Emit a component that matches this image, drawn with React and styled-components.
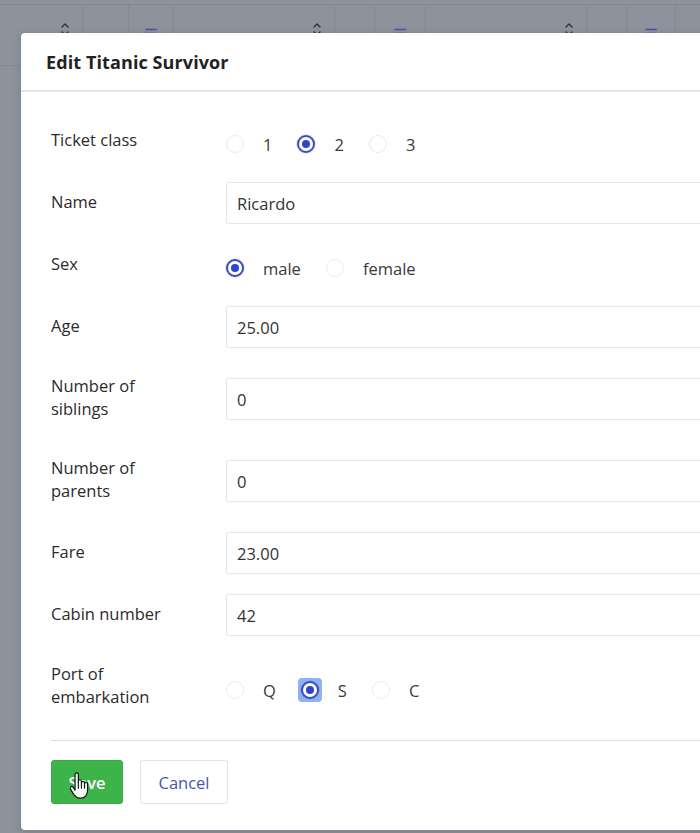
import React from "react";
import styled, { createGlobalStyle } from "styled-components";

const Global = createGlobalStyle`
  html, body { margin: 0; padding: 0; height: 100%; overflow: hidden; }
  body { font-family: "Open Sans", "Noto Sans", sans-serif; background: #8e929d; }
  #root { height: 100%; }
`;

const Page = styled.div`
  position: relative;
  width: 700px;
  height: 833px;
  overflow: hidden;
  background: #8e929d;
`;

const BgRow = styled.div`
  display: flex;
  margin-top: 4px;
  height: 60px;
  border-top: 1px solid #858893;
  border-bottom: 1px solid #858893;
`;

const BgCell = styled.div`
  flex: 0 0 ${(p) => p.$w}px;
  box-sizing: border-box;
  border-right: 1px solid #868994;
  display: flex;
  justify-content: ${(p) => (p.$kind === "sort" ? "flex-end" : "center")};
  padding-right: ${(p) => (p.$kind === "sort" ? "12px" : "0")};
  padding-top: 15px;
  font-family: "DejaVu Sans", sans-serif;
`;

const SortIcon = styled.svg`
  width: 10px;
  height: 18px;
`;

const EqIcon = styled.div`
  font-size: 18px;
  line-height: 18px;
  color: #4a519e;
  padding-top: 2px;
`;

const Modal = styled.div`
  position: absolute;
  left: 21px;
  top: 33px;
  width: 760px;
  background: #fff;
  border-radius: 4px;
  box-shadow: 0 2px 10px rgba(0, 0, 0, 0.15);
`;

const Header = styled.div`
  height: 59px;
  display: flex;
  align-items: center;
  padding-left: 25px;
  padding-top: 1px;
  box-sizing: border-box;
  border-bottom: 2px solid #e4e5e7;
`;

const Title = styled.h2`
  margin: 0;
  font-size: 18px;
  font-weight: 700;
  color: #222;
  letter-spacing: 0.1px;
`;

const Body = styled.div`
  padding: 28px 30px 26px 30px;
`;

const Form = styled.div`
  display: grid;
  grid-template-columns: 175px 1fr;
  row-gap: 20px;
  align-items: center;
`;

const Label = styled.div`
  font-size: 16.5px;
  font-weight: 500;
  line-height: 23px;
  color: #2b2b2b;
  padding: 6px 0 10px;
  width: 110px;
`;

const Input = styled.div`
  height: 42px;
  box-sizing: border-box;
  border: 1px solid #e6e7e9;
  border-radius: 2px;
  display: flex;
  align-items: center;
  padding-left: 10px;
  font-size: 16.5px;
  color: #333;
`;

const RadioGroup = styled.div`
  display: flex;
  align-items: center;
  min-height: 42px;
  box-sizing: border-box;
  padding-top: 6px;
`;

const RadioItem = styled.label`
  display: flex;
  align-items: center;
  gap: 19px;
  margin-right: 25px;
  font-size: 16.5px;
  color: #3a3a3a;
`;

const Focus = styled.span`
  display: inline-flex;
  margin: -3px;
  padding: 3px;
  border-radius: 4px;
  background: ${(p) => (p.$on ? "#8fb3f2" : "transparent")};
`;

const Circle = styled.span`
  width: 18px;
  height: 18px;
  box-sizing: border-box;
  border-radius: 50%;
  background: #fff;
  border: ${(p) => (p.$checked ? "2px solid #3b4cc2" : "1px solid #ececee")};
  display: flex;
  align-items: center;
  justify-content: center;
  box-shadow: ${(p) => (p.$checked ? "0 0 0 1px rgba(59,76,194,0.15)" : "none")};
  &::after {
    content: "";
    display: ${(p) => (p.$checked ? "block" : "none")};
    width: 8px;
    height: 8px;
    border-radius: 50%;
    background: #2d44d2;
  }
`;

const Divider = styled.div`
  margin-top: 22px;
  border-top: 1px solid #dcdde0;
`;

const Buttons = styled.div`
  display: flex;
  gap: 17px;
  padding-top: 19px;
`;

const Button = styled.button`
  position: relative;
  height: 44px;
  width: ${(p) => (p.$primary ? 72 : 88)}px;
  box-sizing: border-box;
  border-radius: 3px;
  font-family: "Open Sans", sans-serif;
  font-size: 16.5px;
  font-weight: ${(p) => (p.$primary ? 600 : 400)};
  color: ${(p) => (p.$primary ? "#fff" : "#4a55ae")};
  background: ${(p) => (p.$primary ? "#3db44a" : "#fff")};
  border: 1px solid ${(p) => (p.$primary ? "#38a946" : "#e4e5e8")};
  padding: 0;
  cursor: pointer;
`;

const Cursor = styled.svg`
  position: absolute;
  left: 17px;
  top: 11px;
  width: 22px;
  height: 28px;
`;

function Radio({ label, checked, focused }) {
  return (
    <RadioItem>
      <Focus $on={focused}>
        <Circle $checked={checked} />
      </Focus>
      {label}
    </RadioItem>
  );
}

const bgCells = [
  { w: 83, kind: "sort" },
  { w: 46 },
  { w: 45, kind: "eq" },
  { w: 161, kind: "sort" },
  { w: 40 },
  { w: 51, kind: "eq" },
  { w: 161, kind: "sort" },
  { w: 40 },
  { w: 49, kind: "eq" },
  { w: 120 },
];

export default function App() {
  return (
    <>
      <Global />
      <Page>
        <BgRow>
          {bgCells.map((c, i) => (
            <BgCell key={i} $w={c.w} $kind={c.kind}>
              {c.kind === "sort" && (
                <SortIcon viewBox="0 0 10 18">
                  <path d="M2 7L5 4L8 7M2 12L5 15L8 12" fill="none" stroke="#2e3139" strokeWidth="1.4" strokeLinecap="round" strokeLinejoin="round" />
                </SortIcon>
              )}
              {c.kind === "eq" && <EqIcon>=</EqIcon>}
            </BgCell>
          ))}
        </BgRow>
        <Modal>
          <Header>
            <Title>Edit Titanic Survivor</Title>
          </Header>
          <Body>
            <Form>
              <Label>Ticket class</Label>
              <RadioGroup>
                <Radio label="1" />
                <Radio label="2" checked />
                <Radio label="3" />
              </RadioGroup>

              <Label>Name</Label>
              <Input>Ricardo</Input>

              <Label>Sex</Label>
              <RadioGroup>
                <Radio label="male" checked />
                <Radio label="female" />
              </RadioGroup>

              <Label>Age</Label>
              <Input>25.00</Input>

              <Label>Number of siblings</Label>
              <Input>0</Input>

              <Label>Number of parents</Label>
              <Input>0</Input>

              <Label>Fare</Label>
              <Input>23.00</Input>

              <Label>Cabin number</Label>
              <Input>42</Input>

              <Label>Port of embarkation</Label>
              <RadioGroup>
                <Radio label="Q" />
                <Radio label="S" checked focused />
                <Radio label="C" />
              </RadioGroup>
            </Form>
            <Divider />
            <Buttons>
              <Button $primary>
                Save
                <Cursor viewBox="0 0 20 25">
                  <path
                    d="M5.5 2.2C5.5 1.2 6.2 0.6 7 0.6C7.8 0.6 8.5 1.2 8.5 2.2V9V8.2C8.5 7.4 9.1 6.8 9.9 6.8C10.7 6.8 11.3 7.4 11.3 8.2V9.6C11.3 8.8 11.9 8.3 12.7 8.3C13.5 8.3 14.1 8.8 14.1 9.6V10.6C14.1 9.8 14.7 9.3 15.5 9.3C16.3 9.3 16.9 9.8 16.9 10.6V16.2C16.9 20.4 14.6 23.6 11 23.6H9.6C7.2 23.6 5.8 22.2 4.3 20.1L1.3 15.4C0.8 14.6 1 13.6 1.7 13.2C2.4 12.8 3.3 13 3.8 13.7L5.5 16.2Z"
                    fill="#f4fbf2"
                    stroke="#111"
                    strokeWidth="1.1"
                    strokeLinejoin="round"
                  />
                  <path d="M8.5 9V14.5M11.3 9.6V14.5M14.1 10.6V14.5" stroke="#111" strokeWidth="1" strokeLinecap="round" />
                </Cursor>
              </Button>
              <Button>Cancel</Button>
            </Buttons>
          </Body>
        </Modal>
      </Page>
    </>
  );
}
